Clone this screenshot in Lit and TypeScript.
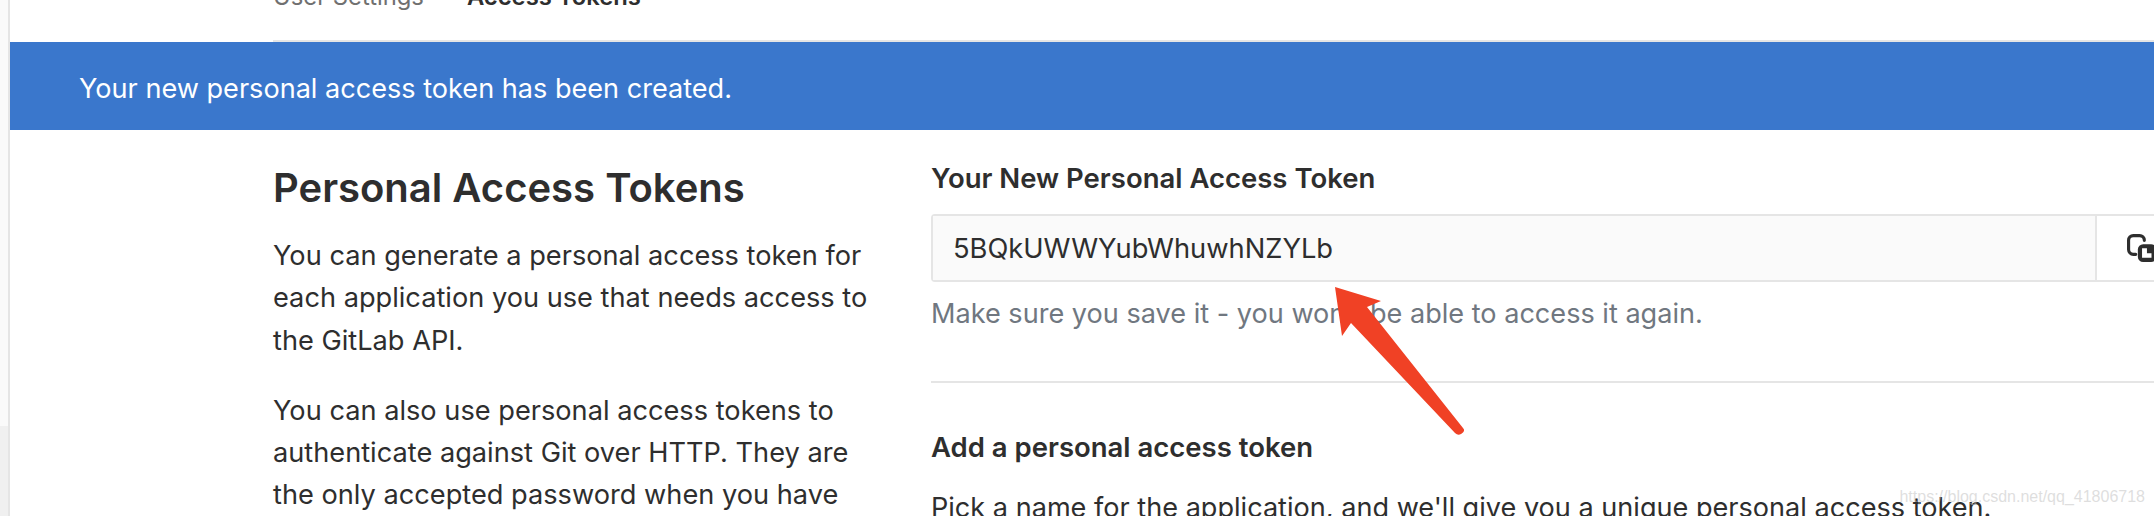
import { LitElement, html, css } from "lit";
import { customElement } from "lit/decorators.js";

@customElement("app-root")
export class AppRoot extends LitElement {
  static styles = css`
    :host {
      display: flex;
      width: 2154px;
      height: 516px;
      overflow: hidden;
      background: #fff;
      font-family: Inter, "Liberation Sans", sans-serif;
      color: #2e2e2e;
      position: relative;
    }
    .rail {
      width: 10px;
      flex: none;
      display: flex;
      flex-direction: column;
      box-sizing: border-box;
      border-right: 2px solid #e5e5e5;
    }
    .rail-top { height: 426px; background: #fafafa; }
    .rail-bottom { flex: 1; background: #f0f0f0; }
    main { flex: 1; min-width: 0; display: flex; flex-direction: column; }
    .crumbs {
      height: 42px;
      flex: none;
      box-sizing: border-box;
      margin-left: 263px;
      border-bottom: 2px solid #e5e5e5;
      display: flex;
      align-items: flex-end;
      overflow: hidden;
      font-size: 23.8px;
      line-height: 28px;
    }
    .crumbs-row { display: flex; gap: 43px; padding-bottom: 29px; white-space: nowrap; }
    .crumb { color: #707070; }
    .crumb.on { color: #2e2e2e; font-weight: 600; }
    .banner {
      height: 88px;
      flex: none;
      box-sizing: border-box;
      background: #3a77cc;
      color: #fff;
      font-size: 27.1px;
      display: flex;
      align-items: center;
      padding: 4px 0 0 69px;
    }
    .content { display: flex; flex: none; padding-left: 263px; }
    .left { width: 658px; flex: none; }
    h1 { margin: 0; font-size: 40px; line-height: 48px; font-weight: 600; padding-top: 34px; }
    .left p { margin: 0; font-size: 27.2px; line-height: 42.3px; }
    .left p.first { margin-top: 23px; }
    .left p.second { margin-top: 28px; }
    .right { width: 1300px; flex: none; }
    h2 { margin: 0; font-size: 27.5px; line-height: 32px; font-weight: 600; }
    .label { padding-top: 32px; }
    .group {
      margin-top: 20px;
      height: 68px;
      box-sizing: border-box;
      display: flex;
      border: 2px solid #e5e5e5;
      border-radius: 4px;
    }
    .token {
      width: 1164px;
      flex: none;
      box-sizing: border-box;
      background: #fafafa;
      border-right: 2px solid #e5e5e5;
      padding-left: 20px;
      display: flex;
      align-items: center;
      font-size: 27.3px;
    }
    .copy { flex: 1; display: flex; align-items: center; padding-left: 30px; }
    .copy svg { width: 28px; height: 28px; display: block; }
    .help { margin: 14px 0 0; font-size: 27.1px; line-height: 36px; color: #707780; }
    hr { border: 0; border-top: 2px solid #e5e5e5; margin: 49px 0 0; }
    .add { margin-top: 48px; }
    .right p { margin: 24px 0 0; font-size: 27.1px; line-height: 42px; white-space: nowrap; }
    .arrow { position: absolute; left: 0; top: 0; width: 2154px; height: 516px; pointer-events: none; }
    .mark {
      position: absolute;
      right: 9px;
      top: 484px;
      font: 16px/26px "Liberation Sans", sans-serif;
      color: rgba(190, 190, 190, 0.5);
    }
  `;

  render() {
    return html`
      <div class="rail"><div class="rail-top"></div><div class="rail-bottom"></div></div>
      <main>
        <div class="crumbs">
          <div class="crumbs-row">
            <span class="crumb">User Settings</span>
            <span class="crumb on">Access Tokens</span>
          </div>
        </div>
        <div class="banner">Your new personal access token has been created.</div>
        <div class="content">
          <section class="left">
            <h1>Personal Access Tokens</h1>
            <p class="first">You can generate a personal access token for<br />each application you use that needs access to<br />the GitLab API.</p>
            <p class="second">You can also use personal access tokens to<br />authenticate against Git over HTTP. They are<br />the only accepted password when you have</p>
          </section>
          <section class="right">
            <h2 class="label">Your New Personal Access Token</h2>
            <div class="group">
              <div class="token">5BQkUWWYubWhuwhNZYLb</div>
              <div class="copy">
                <svg viewBox="0 0 16 16" fill="none" stroke="#2e2e2e" stroke-width="1.8">
                  <path d="M5 11.6H3.6A2.7 2.7 0 0 1 .9 8.9V3.6A2.7 2.7 0 0 1 3.6.9h3.6a2.7 2.7 0 0 1 2.7 2.7" stroke-linecap="round" />
                  <rect x="6.2" y="5.8" width="10.6" height="10.2" rx="3" fill="#2e2e2e" stroke="none" />
                  <path d="M8.6 8.2h2.8v2.8H14v2.6H8.6z" fill="#fff" stroke="none" />
                </svg>
              </div>
            </div>
            <div class="help">Make sure you save it - you won't be able to access it again.</div>
            <hr />
            <h2 class="add">Add a personal access token</h2>
            <p>Pick a name for the application, and we'll give you a unique personal access token.</p>
          </section>
        </div>
      </main>
      <svg class="arrow" viewBox="0 0 2154 516">
        <path fill="#f04125" d="M1335 287L1381 301L1367 307L1463 428Q1466 431 1461 434Q1458 436 1455 433L1351 323L1342 336Z" />
      </svg>
      <div class="mark">https://blog.csdn.net/qq_41806718</div>
    `;
  }
}
